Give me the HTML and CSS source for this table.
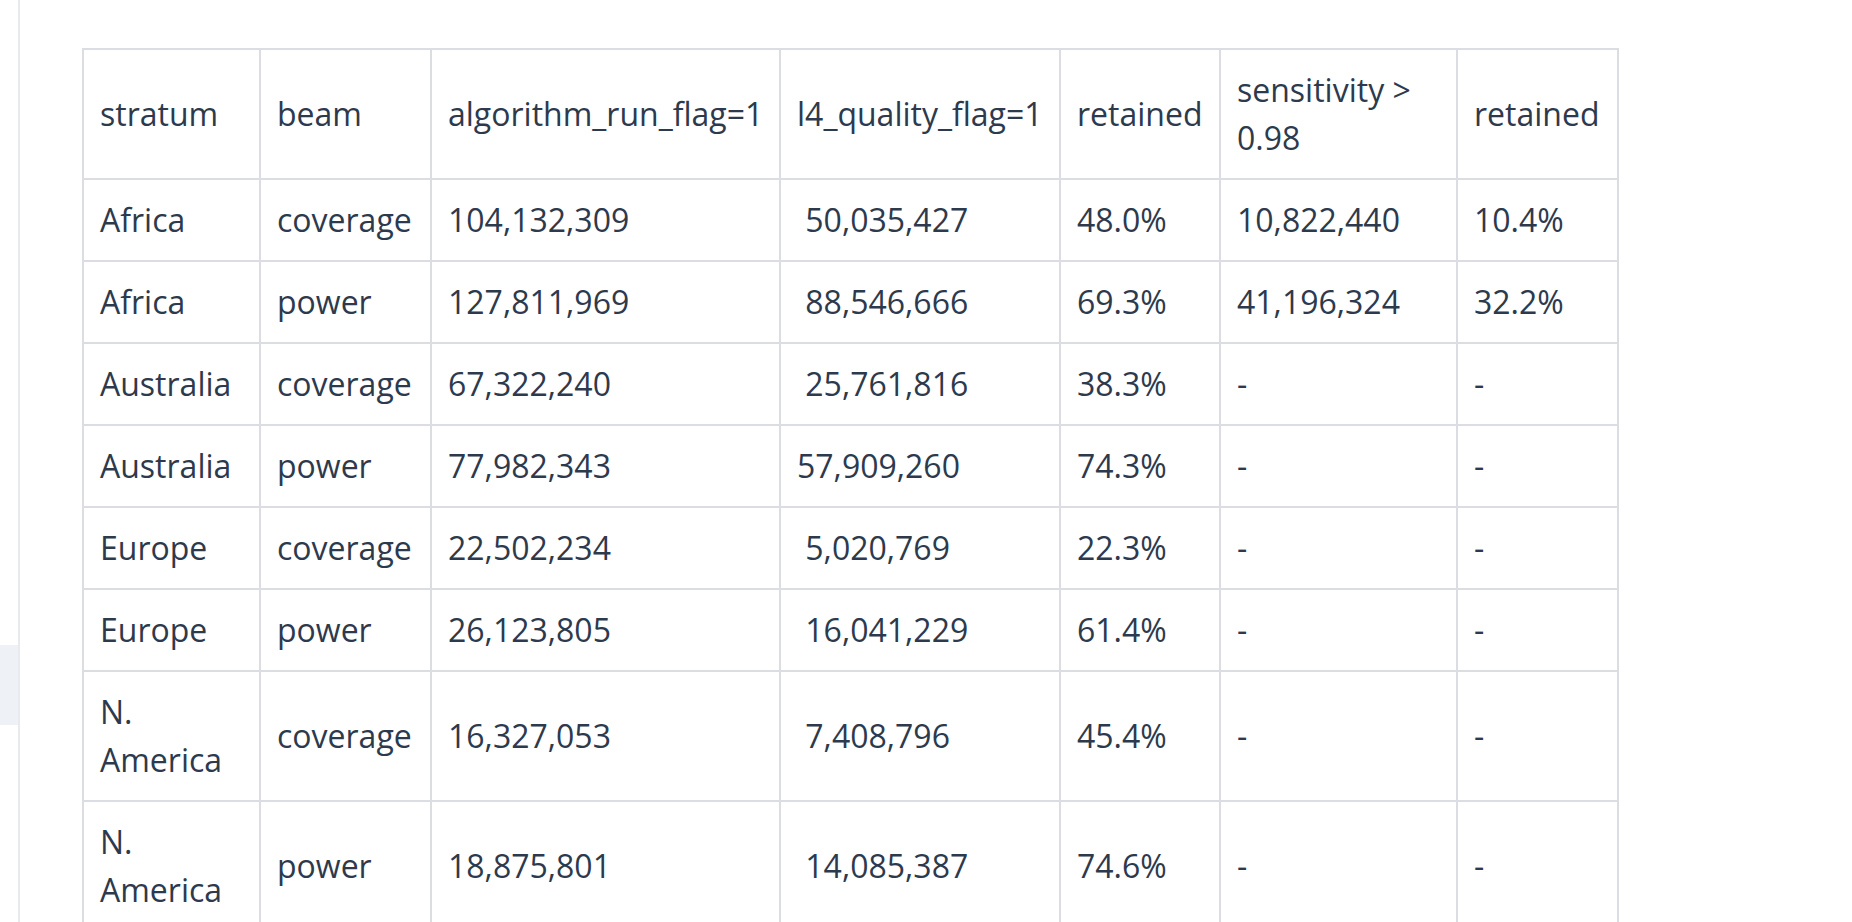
FILE: index.html
```html
<!DOCTYPE html>
<html lang="en">
<head>
<meta charset="utf-8">
<title>Strata</title>
<link rel="stylesheet" href="styles.css">
</head>
<body>
<div class="layout">
  <aside class="sidebar">
    <div class="nav-active"></div>
  </aside>
  <main class="content">
    <table class="data">
      <colgroup>
        <col class="c1"><col class="c2"><col class="c3"><col class="c4"><col class="c5"><col class="c6"><col class="c7">
      </colgroup>
      <thead>
        <tr>
          <th>stratum</th>
          <th>beam</th>
          <th>algorithm_run_flag=1</th>
          <th>l4_quality_flag=1</th>
          <th>retained</th>
          <th>sensitivity &gt; 0.98</th>
          <th>retained</th>
        </tr>
      </thead>
      <tbody>
        <tr><td>Africa</td><td>coverage</td><td>104,132,309</td><td>&nbsp;50,035,427</td><td>48.0%</td><td>10,822,440</td><td>10.4%</td></tr>
        <tr><td>Africa</td><td>power</td><td>127,811,969</td><td>&nbsp;88,546,666</td><td>69.3%</td><td>41,196,324</td><td>32.2%</td></tr>
        <tr><td>Australia</td><td>coverage</td><td>67,322,240</td><td>&nbsp;25,761,816</td><td>38.3%</td><td>-</td><td>-</td></tr>
        <tr><td>Australia</td><td>power</td><td>77,982,343</td><td>57,909,260</td><td>74.3%</td><td>-</td><td>-</td></tr>
        <tr><td>Europe</td><td>coverage</td><td>22,502,234</td><td>&nbsp;5,020,769</td><td>22.3%</td><td>-</td><td>-</td></tr>
        <tr><td>Europe</td><td>power</td><td>26,123,805</td><td>&nbsp;16,041,229</td><td>61.4%</td><td>-</td><td>-</td></tr>
        <tr><td>N. America</td><td>coverage</td><td>16,327,053</td><td>&nbsp;7,408,796</td><td>45.4%</td><td>-</td><td>-</td></tr>
        <tr><td>N. America</td><td>power</td><td>18,875,801</td><td>&nbsp;14,085,387</td><td>74.6%</td><td>-</td><td>-</td></tr>
      </tbody>
    </table>
  </main>
</div>
</body>
</html>
```

FILE: styles.css
```css
html, body {
  margin: 0;
  padding: 0;
  background: #ffffff;
}

body {
  font-family: "Open Sans", "Noto Sans", sans-serif;
  color: #2d3a4d;
  overflow: hidden;
}

.layout {
  display: flex;
  align-items: stretch;
  min-height: 922px;
}

.sidebar {
  width: 18px;
  flex: 0 0 18px;
  border-right: 2px solid #e8eaee;
  padding-top: 645px;
  box-sizing: content-box;
}

.nav-active {
  height: 80px;
  background: #eef2f7;
}

.content {
  flex: 1;
  padding: 48px 0 0 62px;
}

.data {
  border-collapse: collapse;
  table-layout: fixed;
  width: 1535px;
  font-size: 32px;
  line-height: 48px;
}

.c1 { width: 177px; }
.c2 { width: 171px; }
.c3 { width: 349px; }
.c4 { width: 280px; }
.c5 { width: 160px; }
.c6 { width: 237px; }
.c7 { width: 161px; }

.data th,
.data td {
  border: 2px solid #dcdce3;
  padding: 16px 14px 16px 16px;
  text-align: left;
  vertical-align: middle;
  font-weight: 400;
}
```
